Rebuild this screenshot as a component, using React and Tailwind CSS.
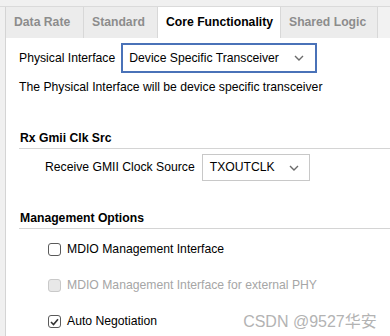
import React from 'react';

const Chevron = () => (
  <svg width="10" height="6" viewBox="0 0 10 6" className="text-[#6b6b6b]">
    <path d="M1 1 L5 5 L9 1" fill="none" stroke="currentColor" strokeWidth="1.4" />
  </svg>
);

const Check = ({ checked, disabled, label }) => (
  <div className="flex items-center h-[15px]">
    <div
      className={
        'w-[13px] h-[13px] rounded-[3px] border flex items-center justify-center ' +
        (disabled ? 'border-[#c9c9c9] bg-[#e8e8e8]' : 'border-[#5a5a5a] bg-white')
      }
    >
      {checked && (
        <svg width="9" height="8" viewBox="0 0 9 8">
          <path d="M1 4 L3.5 6.5 L8 1.2" fill="none" stroke="#333" strokeWidth="1.6" />
        </svg>
      )}
    </div>
    <span className={'ml-[6px] ' + (disabled ? 'text-[#a6a6a6]' : 'text-black')}>{label}</span>
  </div>
);

const tabs = [
  { name: 'Data Rate', w: 'w-[78px]' },
  { name: 'Standard', w: 'w-[74px]' },
  { name: 'Core Functionality', w: 'w-[123px]', active: true },
  { name: 'Shared Logic', w: 'w-[97px]' },
];

export default function App() {
  return (
    <div className="w-[390px] h-[336px] overflow-hidden bg-[#f0f0f0] text-[12.2px] leading-[15px] text-black font-['Liberation_Sans',Arial,sans-serif]">
      <div className="h-[7px] border-b border-[#dadada]"></div>
      <div className="flex h-[31px] ml-[5px] border-l border-[#d4d4d4]">
        {tabs.map((t) => (
          <div
            key={t.name}
            className={
              t.w +
              ' flex items-center pl-[8px] font-bold border-r border-[#d8d8d8] ' +
              (t.active ? 'bg-white text-black' : 'bg-[#ececec] text-[#8c8c8c]')
            }
          >
            {t.name}
          </div>
        ))}
        <div className="flex-1 bg-[#f2f2f2]"></div>
      </div>
      <div className="ml-[5px] h-full bg-white border-l border-[#d4d4d4] pl-[13px] pt-[5px]">
        <div className="flex items-center">
          <span>Physical Interface</span>
          <div className="ml-[6px] w-[196px] h-[30px] border-2 border-[#4a72b8] flex items-center justify-between pl-[6px] pr-[11px]">
            <span>Device Specific Transceiver</span>
            <Chevron />
          </div>
        </div>
        <div className="mt-[7px]">The Physical Interface will be device specific transceiver</div>

        <div className="mt-[36px] pl-[1px] font-bold pb-[2px] border-b border-[#d4d4d4]">Rx Gmii Clk Src</div>
        <div className="flex items-center mt-[5px] pl-[26px]">
          <span>Receive GMII Clock Source</span>
          <div className="ml-[7px] w-[108px] h-[27px] border border-[#c8c8c8] flex items-center justify-between pl-[7px] pr-[10px]">
            <span>TXOUTCLK</span>
            <Chevron />
          </div>
        </div>

        <div className="mt-[30px] pl-[1px] font-bold pb-[2px] border-b border-[#d4d4d4]">Management Options</div>
        <div className="pl-[29px] mt-[13px] flex flex-col gap-[21px]">
          <Check label="MDIO Management Interface" />
          <Check disabled label="MDIO Management Interface for external PHY" />
          <div className="flex items-center">
            <Check checked label="Auto Negotiation" />
            <span className="ml-[86px] text-[16px] text-[#b3b3b3] font-['Liberation_Sans','Noto_Sans_CJK_SC',sans-serif]">CSDN @9527华安</span>
          </div>
        </div>
      </div>
    </div>
  );
}
